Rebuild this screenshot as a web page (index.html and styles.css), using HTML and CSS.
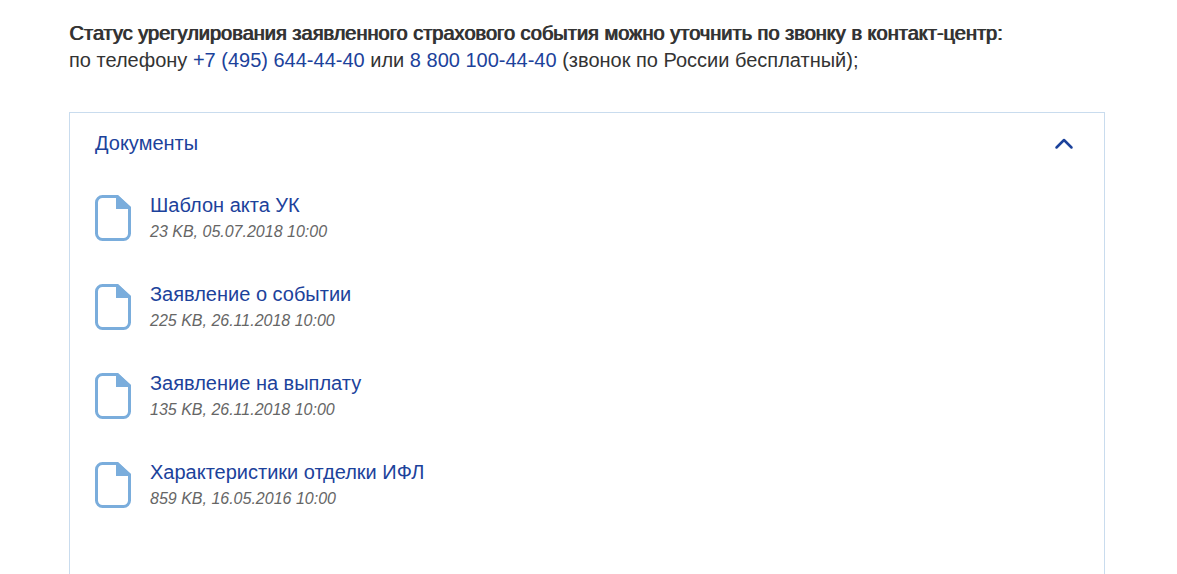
FILE: index.html
```html
<!DOCTYPE html>
<html lang="ru">
<head>
    <meta charset="UTF-8">
    <meta name="viewport" content="width=device-width, initial-scale=1.0">
    <title>Документы</title>
    <link rel="stylesheet" href="styles.css">
</head>
<body>
    <main class="content">
        <p class="status">
            <strong class="status-title">Статус урегулирования заявленного страхового события можно уточнить по звонку в контакт-центр:</strong><br>
            по телефону <a href="tel:+74956444440">+7 (495) 644-44-40</a> или <a href="tel:88001004440">8 800 100-44-40</a> (звонок по России бесплатный);
        </p>
        <section class="documents">
            <button class="documents-toggle" type="button" aria-expanded="true" aria-controls="documents-list">
                <span>Документы</span>
                <svg class="arrow" viewBox="0 0 20 12" aria-hidden="true">
                    <path d="M2.5 9.5L10 2l7.5 7.5"/>
                </svg>
            </button>
            <ul class="documents-list" id="documents-list">
                <li class="document">
                    <svg class="file-icon" viewBox="0 0 36 46" aria-hidden="true">
                        <path class="file-page" d="M22 1.5H7.5a6 6 0 0 0-6 6v31a6 6 0 0 0 6 6h21a6 6 0 0 0 6-6V13z"/>
                        <path class="file-corner" d="M21 0h2l13 12v2H21z"/>
                    </svg>
                    <div class="document-info">
                        <a href="#">Шаблон акта УК</a>
                        <span class="document-meta">23 KB, 05.07.2018 10:00</span>
                    </div>
                </li>
                <li class="document">
                    <svg class="file-icon" viewBox="0 0 36 46" aria-hidden="true">
                        <path class="file-page" d="M22 1.5H7.5a6 6 0 0 0-6 6v31a6 6 0 0 0 6 6h21a6 6 0 0 0 6-6V13z"/>
                        <path class="file-corner" d="M21 0h2l13 12v2H21z"/>
                    </svg>
                    <div class="document-info">
                        <a href="#">Заявление о событии</a>
                        <span class="document-meta">225 KB, 26.11.2018 10:00</span>
                    </div>
                </li>
                <li class="document">
                    <svg class="file-icon" viewBox="0 0 36 46" aria-hidden="true">
                        <path class="file-page" d="M22 1.5H7.5a6 6 0 0 0-6 6v31a6 6 0 0 0 6 6h21a6 6 0 0 0 6-6V13z"/>
                        <path class="file-corner" d="M21 0h2l13 12v2H21z"/>
                    </svg>
                    <div class="document-info">
                        <a href="#">Заявление на выплату</a>
                        <span class="document-meta">135 KB, 26.11.2018 10:00</span>
                    </div>
                </li>
                <li class="document">
                    <svg class="file-icon" viewBox="0 0 36 46" aria-hidden="true">
                        <path class="file-page" d="M22 1.5H7.5a6 6 0 0 0-6 6v31a6 6 0 0 0 6 6h21a6 6 0 0 0 6-6V13z"/>
                        <path class="file-corner" d="M21 0h2l13 12v2H21z"/>
                    </svg>
                    <div class="document-info">
                        <a href="#">Характеристики отделки ИФЛ</a>
                        <span class="document-meta">859 KB, 16.05.2016 10:00</span>
                    </div>
                </li>
            </ul>
        </section>
    </main>
</body>
</html>
```

FILE: styles.css
```css
* {
    box-sizing: border-box;
}
body {
    margin: 0;
    background-color: #fff;
    color: #333;
    font-family: 'Liberation Sans', Arial, sans-serif;
    font-size: 20px;
    line-height: 27px;
}
a {
    color: #1c429b;
    text-decoration: none;
}
a:hover {
    text-decoration: underline;
}
.content {
    display: flex;
    flex-direction: column;
    min-height: 100vh;
    padding: 20px 72px 0 69px;
}
.status {
    margin: 0 0 38px;
}
.status-title {
    font-weight: normal;
    text-shadow: 1px 0 #333;
}
.documents {
    flex: 1;
    border: 1px solid #c9dcee;
    border-bottom: none;
}
.documents-toggle {
    display: flex;
    justify-content: space-between;
    align-items: center;
    width: 100%;
    padding: 17px 30px 17px 25px;
    border: none;
    background: none;
    color: #1c429b;
    font: inherit;
    cursor: pointer;
}
.arrow {
    width: 20px;
    height: 12px;
    fill: none;
    stroke: #1c429b;
    stroke-width: 2.5;
    stroke-linecap: round;
    stroke-linejoin: round;
}
.documents-list {
    display: flex;
    flex-direction: column;
    gap: 36px;
    margin: 0;
    padding: 18px 25px 60px;
    list-style: none;
}
.document {
    display: flex;
    align-items: flex-start;
    gap: 19px;
}
.file-icon {
    width: 36px;
    height: 46px;
    margin-top: 3px;
    flex-shrink: 0;
}
.file-page {
    fill: none;
    stroke: #7aaddc;
    stroke-width: 3;
}
.file-corner {
    fill: #7aaddc;
}
.document-info {
    display: flex;
    flex-direction: column;
}
.document-meta {
    color: #666;
    font-size: 16px;
    font-style: italic;
    line-height: 26px;
}
```
